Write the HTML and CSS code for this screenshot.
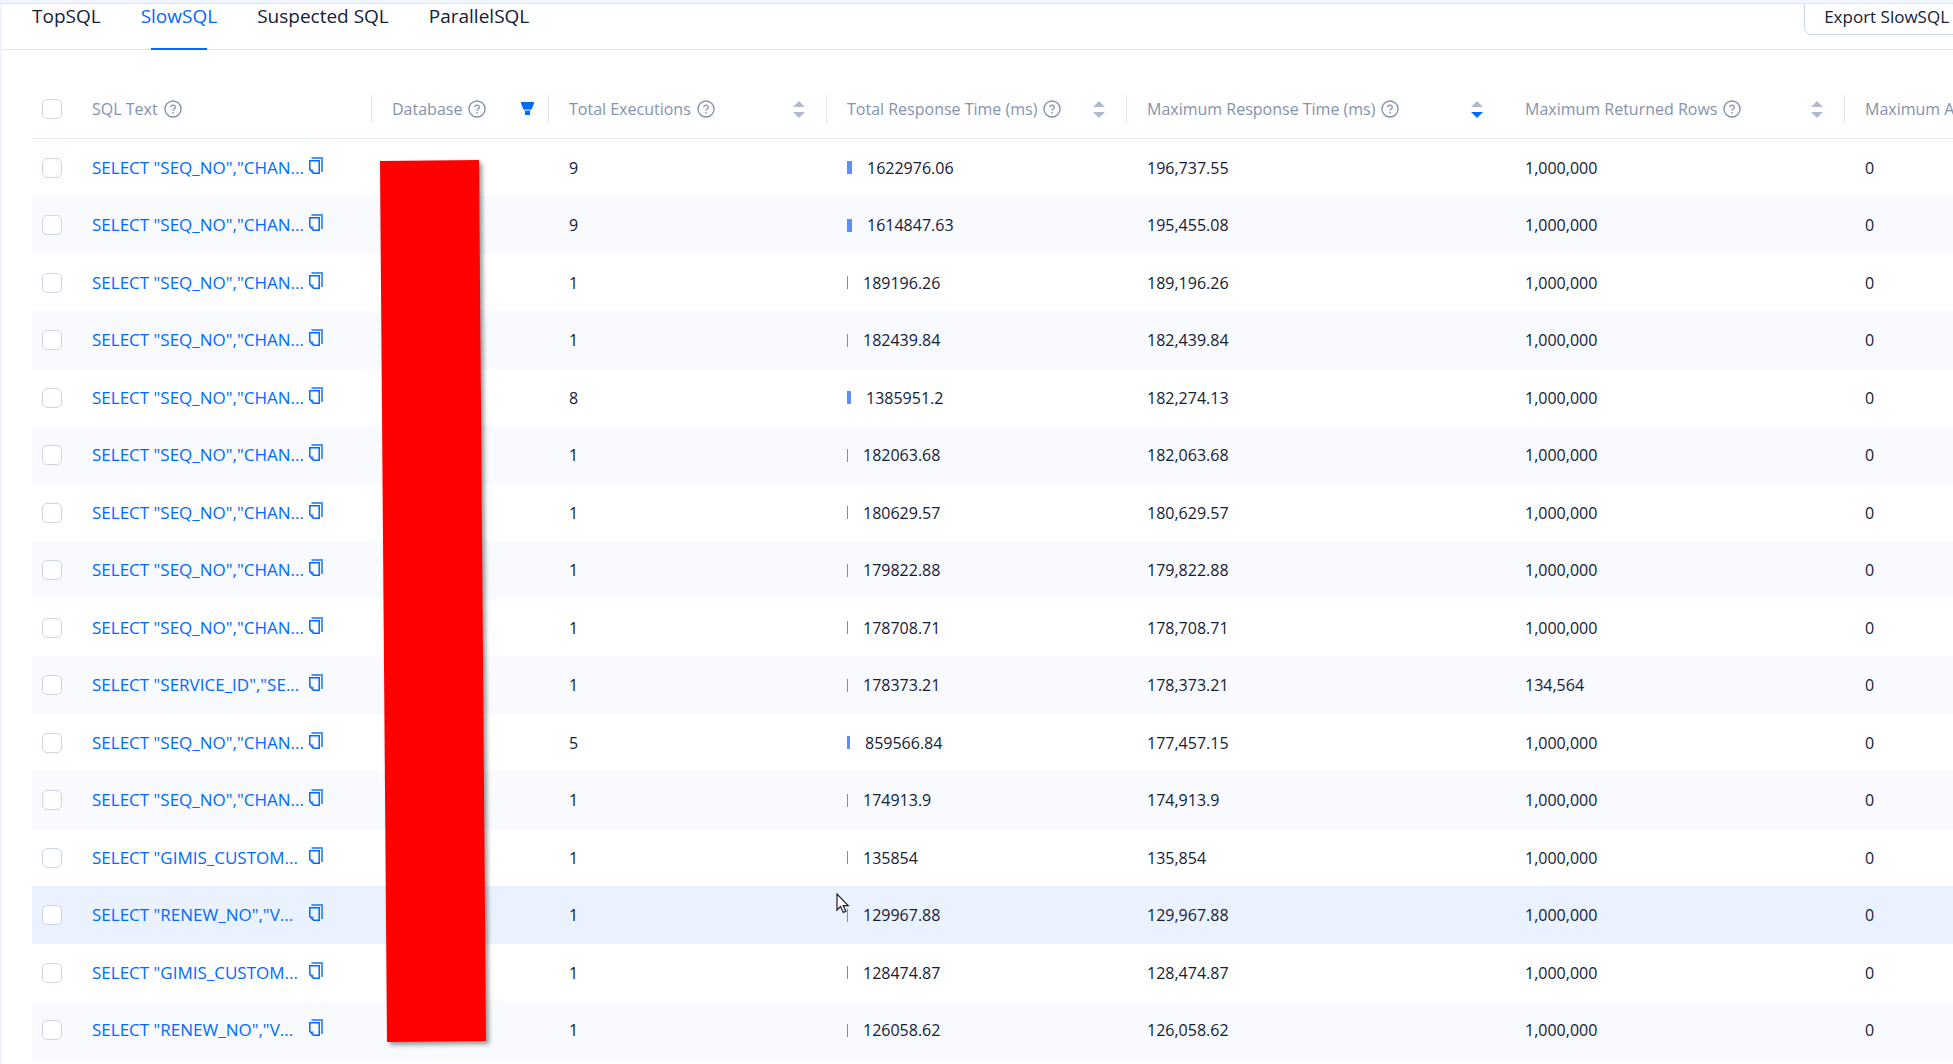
FILE: index.html
```
<!DOCTYPE html>
<html lang="en">
<head>
    <meta charset="UTF-8">
    <meta name="viewport" content="width=device-width, initial-scale=1.0">
    <title>SQL Diagnosis - SlowSQL</title>
    <link rel="stylesheet" href="styles.css">
</head>
<body>
    <svg class="sprite" aria-hidden="true">
        <symbol id="icon-help" viewBox="0 0 18 18">
            <circle cx="9" cy="9" r="8" fill="none" stroke="currentColor" stroke-width="1.4"/>
            <path d="M6.7 7.2a2.3 2.1 0 1 1 3.5 1.8c-.8.5-1.2.8-1.2 1.7" fill="none" stroke="currentColor" stroke-width="1.3"/>
            <circle cx="9" cy="12.8" r=".9" fill="currentColor"/>
        </symbol>
        <symbol id="icon-copy" viewBox="0 0 14 18">
            <path d="M2.5 1H13v14" fill="none" stroke="currentColor" stroke-width="2" opacity=".7"/>
            <path d="M.8 3.8h9.4v12.4H4.5L.8 12.5z" fill="none" stroke="currentColor" stroke-width="1.5"/>
            <path d="M.8 12.5h3.7v3.7z" fill="currentColor" opacity=".7"/>
        </symbol>
        <symbol id="icon-filter" viewBox="0 0 13 14">
            <path d="M0 0h13v1.500l-2.500 6h-8L0 1.500z" fill="currentColor"/>
            <path d="M3 7.500h7v1.500H3z" fill="currentColor" opacity=".4"/>
            <path d="M4 9h5v4H4z" fill="currentColor"/>
        </symbol>
    </svg>

    <div class="topbar"></div>

    <main class="panel">
        <div class="toolbar">
            <nav class="tabs">
                <a href="#" class="tab">TopSQL</a>
                <a href="#" class="tab active">SlowSQL</a>
                <a href="#" class="tab">Suspected SQL</a>
                <a href="#" class="tab">ParallelSQL</a>
            </nav>
            <button type="button" class="btn-export">Export SlowSQL</button>
        </div>

        <div class="table-wrap">
            <table class="sql-table">
                <colgroup>
                    <col class="col-check">
                    <col class="col-sql">
                    <col class="col-db">
                    <col class="col-exec">
                    <col class="col-total">
                    <col class="col-max">
                    <col class="col-rows">
                    <col class="col-affected">
                </colgroup>
                <thead>
                    <tr>
                        <th class="check"><input type="checkbox" aria-label="Select all"></th>
                        <th><div class="head">SQL Text <svg class="help"><use href="#icon-help"/></svg></div></th>
                        <th><div class="head">Database <svg class="help"><use href="#icon-help"/></svg>
                            <button type="button" class="filter" aria-label="Filter"><svg><use href="#icon-filter"/></svg></button></div></th>
                        <th><div class="head">Total Executions <svg class="help"><use href="#icon-help"/></svg><button type="button" class="sorter" aria-label="Sort"></button></div></th>
                        <th><div class="head">Total Response Time (ms) <svg class="help"><use href="#icon-help"/></svg><button type="button" class="sorter" aria-label="Sort"></button></div></th>
                        <th class="sorted"><div class="head">Maximum Response Time (ms) <svg class="help"><use href="#icon-help"/></svg><button type="button" class="sorter desc" aria-label="Sort"></button></div></th>
                        <th><div class="head">Maximum Returned Rows <svg class="help"><use href="#icon-help"/></svg><button type="button" class="sorter" aria-label="Sort"></button></div></th>
                        <th><div class="head">Maximum Affected Rows <svg class="help"><use href="#icon-help"/></svg></div></th>
                    </tr>
                </thead>
                <tbody id="sqlRows"></tbody>
            </table>

            <svg class="redaction" viewBox="0 0 110 890" aria-hidden="true">
                <polygon points="0,1 99,0 106,881 7,882" fill="#ff0000"/>
            </svg>
        </div>
    </main>

    <svg class="cursor" viewBox="0 0 14 21" aria-hidden="true">
        <path d="M1 1v16l3.6-3.4L7.3 19.4l2.6-1.200-2.700-5.600h5z" fill="#fff" stroke="#1a1f2e" stroke-width="1.2"/>
    </svg>

    <script>
        const SEQ = 'SELECT "SEQ_NO","CHAN...';
        const SERVICE = 'SELECT "SERVICE_ID","SE...';
        const GIMIS = 'SELECT "GIMIS_CUSTOM...';
        const RENEW = 'SELECT "RENEW_NO","V...';

        // sql, executions, total time, max time, returned rows
        const rows = [
            [SEQ, 9, 1622976.06, 196737.55, 1000000],
            [SEQ, 9, 1614847.63, 195455.08, 1000000],
            [SEQ, 1, 189196.26, 189196.26, 1000000],
            [SEQ, 1, 182439.84, 182439.84, 1000000],
            [SEQ, 8, 1385951.2, 182274.13, 1000000],
            [SEQ, 1, 182063.68, 182063.68, 1000000],
            [SEQ, 1, 180629.57, 180629.57, 1000000],
            [SEQ, 1, 179822.88, 179822.88, 1000000],
            [SEQ, 1, 178708.71, 178708.71, 1000000],
            [SERVICE, 1, 178373.21, 178373.21, 134564],
            [SEQ, 5, 859566.84, 177457.15, 1000000],
            [SEQ, 1, 174913.9, 174913.9, 1000000],
            [GIMIS, 1, 135854, 135854, 1000000],
            [RENEW, 1, 129967.88, 129967.88, 1000000],
            [GIMIS, 1, 128474.87, 128474.87, 1000000],
            [RENEW, 1, 126058.62, 126058.62, 1000000]
        ];
        const hovered = 13;

        document.getElementById('sqlRows').innerHTML = rows.map(function(row, i) {
            const [sql, count, total, max, returned] = row;
            const barWidth = Math.max(1, Math.round(total / 330000));
            return `
                <tr class="${i === hovered ? 'hover' : ''}">
                    <td class="check"><input type="checkbox" aria-label="Select row ${i + 1}"></td>
                    <td><div class="sql"><a href="#">${sql}</a><button type="button" class="copy" aria-label="Copy"><svg><use href="#icon-copy"/></svg></button></div></td>
                    <td></td>
                    <td>${count}</td>
                    <td><div class="meter"><span class="bar" style="width: ${barWidth}px"></span>${total}</div></td>
                    <td>${max.toLocaleString('en-US')}</td>
                    <td>${returned.toLocaleString('en-US')}</td>
                    <td>0</td>
                </tr>`;
        }).join('');
    </script>
</body>
</html>
```
FILE: styles.css
```
:root {
    --primary: #006aff;
    --text: #132039;
    --text-muted: #8592ad;
    --border: #dfe5f2;
    --control-border: #cdd5e4;
    --stripe: #f8fafe;
    --row-hover: #eaf1ff;
    --bar: #5b8ff9;
    --page: #f0f4fc;
}

* {
    margin: 0;
    padding: 0;
    box-sizing: border-box;
}

body {
    background: var(--page);
    color: var(--text);
    font-family: "Segoe UI", "Open Sans", "Noto Sans", sans-serif;
    font-size: 16px;
    line-height: 24px;
    overflow: hidden;
}

button {
    font: inherit;
    color: inherit;
    background: none;
    border: none;
    cursor: pointer;
}

a {
    color: var(--primary);
    text-decoration: none;
}

.sprite {
    display: none;
}

.topbar {
    height: 4px;
    border-bottom: 1px solid var(--border);
}

.panel {
    margin-left: 2px;
    height: calc(100vh - 4px);
    background: #fff;
    overflow: hidden;
}

/* tabs */
.toolbar {
    display: flex;
    justify-content: space-between;
    height: 56px;
    margin-top: -10px;
    padding-left: 30px;
    border-bottom: 1px solid var(--border);
}

.tabs {
    display: flex;
    gap: 40px;
    font-size: 19px;
}

.tab {
    position: relative;
    padding-top: 10px;
    color: var(--text);
}

.tab.active {
    color: var(--primary);
}

.tab.active::after {
    content: "";
    position: absolute;
    left: 10px;
    right: 10px;
    bottom: -1px;
    height: 2px;
    background: var(--primary);
}

.btn-export {
    height: 41px;
    margin-right: -16px;
    padding: 4px 19px 0;
    border: 1px solid var(--control-border);
    border-radius: 7px;
    background: #fff;
    font-size: 17px;
}

/* table */
.table-wrap {
    position: relative;
    margin-top: 45px;
    padding-left: 30px;
    overflow: hidden;
}

.sql-table {
    width: 2120px;
    table-layout: fixed;
    border-collapse: separate;
    border-spacing: 0;
}

.col-check { width: 40px; }
.col-sql { width: 300px; }
.col-db { width: 177px; }
.col-exec { width: 278px; }
.col-total { width: 300px; }
.col-max { width: 378px; }
.col-rows { width: 340px; }

th,
td {
    padding: 0 20px;
    text-align: left;
    white-space: nowrap;
}

th {
    position: relative;
    height: 44px;
    padding-bottom: 15px;
    border-bottom: 1px solid var(--border);
    color: var(--text-muted);
    font-weight: 400;
}

th:not(.check):not(.sorted):not(:last-child)::after {
    content: "";
    position: absolute;
    right: 0;
    top: 0;
    width: 1px;
    height: 28px;
    background: var(--border);
}

tbody tr {
    height: 57px;
}

tbody tr:nth-child(even) {
    height: 58px;
    background: var(--stripe);
}

tbody tr.hover:nth-child(even) {
    background: var(--row-hover);
}

.check {
    padding-left: 10px;
    padding-right: 10px;
}

input[type="checkbox"] {
    appearance: none;
    display: block;
    width: 20px;
    height: 20px;
    border: 1px solid var(--control-border);
    border-radius: 5px;
    background: #fff;
}

.head {
    display: flex;
    align-items: center;
    height: 28px;
}

.help {
    flex: none;
    width: 18px;
    height: 18px;
    margin-left: 6px;
}

.filter {
    height: 14px;
    margin-left: auto;
    margin-right: -5px;
    color: var(--primary);
}

.filter svg {
    display: block;
    width: 13px;
    height: 14px;
}

.sorter {
    display: flex;
    flex-direction: column;
    gap: 5px;
    margin-left: auto;
    margin-right: 2px;
}

.sorter::before,
.sorter::after {
    content: "";
    border: 6px solid transparent;
}

.sorter::before {
    border-top: none;
    border-bottom-color: #b0b9cd;
}

.sorter::after {
    border-bottom: none;
    border-top-color: #b0b9cd;
}

.sorter.desc::after {
    border-top-color: var(--primary);
}

.sql {
    display: flex;
    align-items: center;
    font-size: 17px;
}

.sql a {
    width: 217px;
}

.copy {
    height: 18px;
    margin-bottom: 4px;
    color: var(--primary);
}

.copy svg {
    display: block;
    width: 14px;
    height: 18px;
}

.meter {
    display: flex;
    align-items: center;
    gap: 15px;
}

.bar {
    height: 13px;
    background: var(--bar);
}

/* overlays */
.redaction {
    position: absolute;
    left: 378px;
    top: 65px;
    width: 110px;
    height: 890px;
    filter: drop-shadow(3px 3px 2px rgba(0, 0, 0, 0.4));
}

.cursor {
    position: absolute;
    left: 836px;
    top: 893px;
    width: 14px;
    height: 21px;
}
```
